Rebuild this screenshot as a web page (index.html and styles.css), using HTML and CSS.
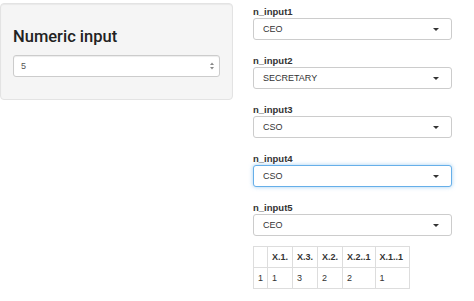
FILE: index.html
```html
<!DOCTYPE html>
<html lang="en">
<head>
  <meta charset="UTF-8">
  <title>Numeric input</title>
  <link rel="stylesheet" href="styles.css">
</head>
<body>
  <div class="page">
    <!-- sidebar well -->
    <div class="side">
      <div class="well">
        <h2>Numeric input</h2>
        <div class="num-field">
          <span>5</span>
          <svg class="spin" width="6" height="10" viewBox="0 0 6 10">
            <path d="M3 1.5 L5 4 L1 4 Z" fill="#888"/>
            <path d="M3 8.5 L5 6 L1 6 Z" fill="#888"/>
          </svg>
        </div>
      </div>
    </div>

    <!-- main -->
    <div class="main">
      <div class="group">
        <label>n_input1</label>
        <div class="select"><span>CEO</span><i class="caret"></i></div>
      </div>
      <div class="group">
        <label>n_input2</label>
        <div class="select"><span>SECRETARY</span><i class="caret"></i></div>
      </div>
      <div class="group">
        <label>n_input3</label>
        <div class="select"><span>CSO</span><i class="caret"></i></div>
      </div>
      <div class="group">
        <label>n_input4</label>
        <div class="select focus"><span>CSO</span><i class="caret"></i></div>
      </div>
      <div class="group">
        <label>n_input5</label>
        <div class="select"><span>CEO</span><i class="caret"></i></div>
      </div>

      <table class="result">
        <thead>
          <tr><th class="rn"></th><th>X.1.</th><th>X.3.</th><th>X.2.</th><th>X.2..1</th><th>X.1..1</th></tr>
        </thead>
        <tbody>
          <tr><td class="rn">1</td><td>1</td><td>3</td><td>2</td><td>2</td><td>1</td></tr>
        </tbody>
      </table>
    </div>
  </div>
</body>
</html>
```

FILE: styles.css
```css
body, html {
  margin: 0;
  padding: 0;
  background: #fff;
  color: #333;
  font-family: 'Liberation Sans', Arial, sans-serif;
}

.page {
  display: flex;
  gap: 20px;
}

.side {
  width: 233px;
  padding-top: 3px;
}

.well {
  height: 97px;
  box-sizing: border-box;
  background: #f5f5f5;
  border: 1px solid #e3e3e3;
  border-radius: 4px;
  box-shadow: inset 0 1px 1px rgba(0,0,0,0.05);
  padding: 0 12px;
}

.well h2 {
  margin: 23px 0 8px;
  font-family: Roboto, 'Liberation Sans', sans-serif;
  font-weight: 500;
  font-size: 16.5px;
  line-height: 20px;
  color: #222;
}

.num-field {
  display: flex;
  align-items: center;
  justify-content: space-between;
  height: 22px;
  box-sizing: border-box;
  background: #fff;
  border: 1px solid #ccc;
  border-radius: 3px;
  box-shadow: inset 0 1px 1px rgba(0,0,0,0.075);
  padding: 0 4px 0 7px;
  font-size: 9px;
  color: #555;
}

.main {
  width: 199px;
  padding-top: 6px;
}

.group {
  margin-bottom: 15px;
}

.group:last-of-type {
  margin-bottom: 10px;
}

.group label {
  display: block;
  font-size: 9.5px;
  font-weight: bold;
  line-height: 12px;
  color: #333;
}

.select {
  display: flex;
  align-items: center;
  justify-content: space-between;
  height: 22px;
  box-sizing: border-box;
  border: 1px solid #ccc;
  border-radius: 3px;
  background: #fff;
  padding: 0 12px 0 9px;
  font-size: 9px;
  color: #333;
}

.select.focus {
  border-color: #66afe9;
  box-shadow: 0 0 4px rgba(102,175,233,0.6);
}

.caret {
  width: 0;
  height: 0;
  border-left: 3px solid transparent;
  border-right: 3px solid transparent;
  border-top: 3.5px solid #333;
}

.result {
  border-collapse: collapse;
  font-size: 9px;
  color: #333;
}

.result th, .result td {
  border: 1px solid #ddd;
  height: 20px;
  padding: 0 4px;
  text-align: left;
}

.result th {
  font-weight: bold;
}

.result th:last-child, .result td:last-child {
  padding-right: 6px;
}
```
